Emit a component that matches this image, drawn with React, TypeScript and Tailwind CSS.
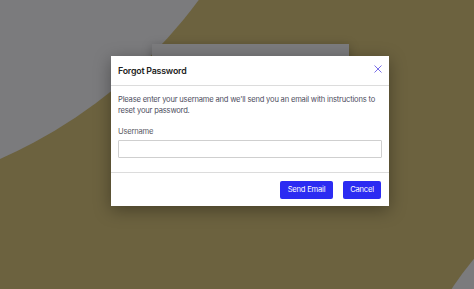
import React from "react";

export default function App() {
  return (
    <div
      className="relative w-[474px] h-[289px] overflow-hidden bg-[#6c623f]"
      style={{ fontFamily: "Inter, 'Noto Sans', sans-serif" }}
    >
      {/* background shapes */}
      <div className="absolute left-[-696px] top-[-791px] w-[992px] h-[992px] rounded-full bg-[#7b7b7d]" />
      <div className="absolute left-[404px] top-[154px] w-[592px] h-[592px] rounded-full bg-[#7b7b7d]" />
      {/* card behind */}
      <div className="absolute left-[152px] top-[44px] w-[197px] h-[150px] bg-[#7b7b7d] shadow-[0_2px_10px_rgba(0,0,0,0.25)]" />

      {/* modal */}
      <div className="absolute left-[111px] top-[56px] w-[278px] h-[150px] bg-white flex flex-col shadow-[0_4px_16px_rgba(0,0,0,0.35)]">
        <div className="h-[30px] flex items-center justify-between pl-[7px] pr-[7px] border-b border-[#dcdcdc]">
          <span className="text-[8.8px] font-semibold text-[#222] tracking-[-0.2px] pt-[1px]">Forgot Password</span>
          <svg width="8" height="8" viewBox="0 0 8 8" className="mb-[3px]">
            <path d="M0.5 0.5 L7.5 7.5 M7.5 0.5 L0.5 7.5" stroke="#6a5ee6" strokeWidth="0.9" fill="none" />
          </svg>
        </div>
        <div className="flex-1 flex flex-col px-[7px] pt-[8px] border-b border-[#dcdcdc]">
          <p className="text-[7.6px] leading-[11px] tracking-[-0.2px] text-[#4e4e60]">
            Please enter your username and we'll send you an email with instructions to reset your password.
          </p>
          <label className="mt-[10px] text-[7.6px] leading-[11px] tracking-[-0.2px] text-[#5a5a64]">Username</label>
          <div className="mt-[3px] h-[18px] w-[264px] border border-[#cfcfcf] rounded-[1px]" />
        </div>
        <div className="h-[33px] flex items-center justify-end gap-[10px] pr-[8px] pt-[1px]">
          <button className="h-[18px] w-[53px] rounded-[2px] bg-[#2b2bf2] text-white text-[7.6px] tracking-[-0.2px]">Send Email</button>
          <button className="h-[18px] w-[38px] rounded-[2px] bg-[#2b2bf2] text-white text-[7.6px] tracking-[-0.2px]">Cancel</button>
        </div>
      </div>
    </div>
  );
}
